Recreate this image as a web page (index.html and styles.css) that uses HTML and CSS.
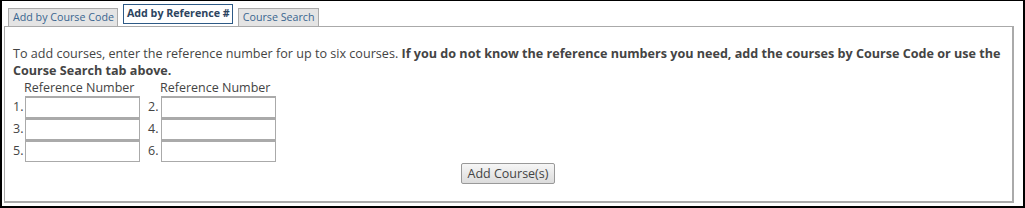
FILE: index.html
```html
<!DOCTYPE html>
<html lang="en">
<head>
<meta charset="utf-8">
<title>Add Courses</title>
<link rel="stylesheet" href="styles.css">
</head>
<body>
<div class="frame">
	<div class="tabs">
		<div class="tab">Add by Course Code</div>
		<div class="tab active">Add by Reference #</div>
		<div class="tab">Course Search</div>
	</div>
	<div class="panel">
		<p class="intro">To add courses, enter the reference number for up to six courses. <b>If you do not know the reference numbers you need, add the courses by Course Code or use the Course Search tab above.</b></p>
		<div class="refs">
			<span></span><span class="head">Reference Number</span>
			<span class="gap"></span><span class="head">Reference Number</span>
			<span class="num">1.</span><input type="text">
			<span class="num gap">2.</span><input type="text">
			<span class="num">3.</span><input type="text">
			<span class="num gap">4.</span><input type="text">
			<span class="num">5.</span><input type="text">
			<span class="num gap">6.</span><input type="text">
		</div>
		<div class="actions">
			<button type="button">Add Course(s)</button>
		</div>
	</div>
</div>
</body>
</html>
```
FILE: styles.css
```css
body {
	margin: 0;
	padding: 0;
	font-family: "Open Sans", sans-serif;
	color: #444;
}

.frame {
	box-sizing: border-box;
	width: 1025px;
	height: 208px;
	border: 2px solid #000;
	border-top-width: 1px;
	background: #fff;
}

.tabs {
	display: flex;
	align-items: flex-end;
	gap: 5px;
	padding: 4px 0 0 6px;
	height: 21px;
}

.tab {
	box-sizing: border-box;
	height: 18px;
	padding: 0 3px 0 4px;
	font-size: 10.7px;
	line-height: 17px;
	color: #3a6690;
	background: #e4e4e4;
	border: 1px solid #aaa;
	border-bottom: none;
}

.tab.active {
	height: 20px;
	margin-bottom: 2px;
	line-height: 17px;
	padding: 0 2px 0 3px;
	font-weight: bold;
	color: #2c4460;
	background: #fff;
	border: 1px solid #2e5a86;
}

.panel {
	box-sizing: border-box;
	height: 177px;
	margin: 0 9px 0 2px;
	padding: 18px 9px 0 8px;
	border: 2px solid #aaa;
	border-left-width: 1px;
	border-top-width: 1px;
}

.intro {
	margin: 0;
	font-size: 12.6px;
	line-height: 17px;
}

.refs {
	display: grid;
	grid-template-columns: 11px 115px 21px 115px;
	font-size: 12.5px;
}

.refs .head {
	line-height: 17px;
	white-space: nowrap;
}

.refs .num {
	line-height: 22px;
}

.refs .gap {
	padding-left: 9px;
}

.refs input {
	box-sizing: border-box;
	width: 115px;
	height: 22px;
	margin: 0 0 0 1px;
	border: 1px solid #aaa;
	border-top-width: 2px;
}

.actions {
	text-align: center;
	margin-top: -1px;
}

button {
	font-family: "Open Sans", sans-serif;
	font-size: 12.5px;
	color: #444;
	height: 21px;
	padding: 0 6px;
	border: 1px solid #999;
	border-radius: 2px;
	background: linear-gradient(#f6f6f6, #dcdcdc);
}
```
